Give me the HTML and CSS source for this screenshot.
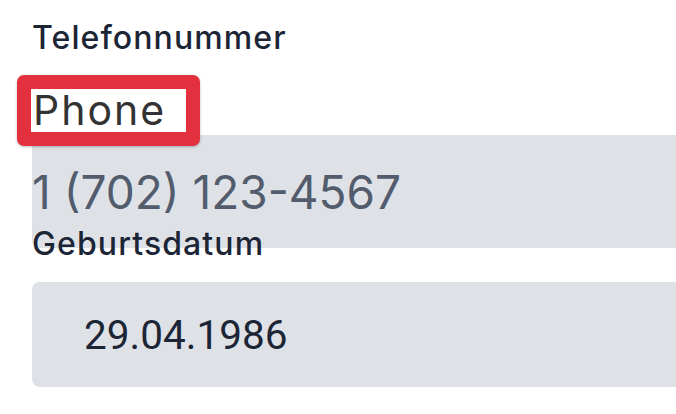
FILE: index.html
```html
<!DOCTYPE html>
<html lang="de">
<head>
<meta charset="utf-8">
<title>Telefonnummer</title>
<link rel="stylesheet" href="styles.css">
</head>
<body>
<form class="form">
  <div class="field">
    <label class="label">Telefonnummer</label>
    <div class="input-wrap">
      <div class="input input-phone">1 (702) 123-4567</div>
      <div class="callout"><span class="callout-text">Phone</span></div>
    </div>
  </div>
  <div class="field">
    <label class="label label-overlap">Geburtsdatum</label>
    <div class="input input-date">29.04.1986</div>
  </div>
</form>
</body>
</html>
```
FILE: styles.css
```css
* { box-sizing: border-box; }
html, body { margin: 0; padding: 0; background: #ffffff; }
body { width: 676px; height: 414px; overflow: hidden; font-family: "Inter", "Noto Sans", sans-serif; }

.form {
  padding: 20px 0 0 32px;
  display: flex;
  flex-direction: column;
}

.label {
  display: block;
  font-size: 32px;
  line-height: 36px;
  font-weight: 500;
  letter-spacing: 1.1px;
  color: #1c2536;
}

.input-wrap {
  position: relative;
  margin-top: 79px;
}

.input {
  background: #dee2e7;
  border-radius: 8px 0 0 8px;
}

.input-phone {
  height: 113px;
  padding-top: 29px;
  font-size: 46px;
  line-height: 56px;
  color: #525c6d;
}

.callout {
  position: absolute;
  left: -15px;
  top: -60px;
  width: 183px;
  height: 71px;
  border: 14px solid #e2303e;
  border-radius: 7px;
  background: #ffffff;
  box-shadow: 0 1px 3px rgba(0,0,0,0.25);
  display: flex;
  align-items: center;
}

.callout-text {
  font-family: "Inter", sans-serif;
  font-size: 41px;
  line-height: 43px;
  letter-spacing: 2px;
  color: #333333;
  padding-left: 2px;
}

.label-overlap {
  margin-top: -22px;
  position: relative;
}

.input-date {
  margin-top: 20px;
  height: 105px;
  display: flex;
  align-items: center;
  padding-left: 52px;
  font-family: "Roboto", sans-serif;
  font-size: 40.5px;
  color: #1c2536;
}
```
